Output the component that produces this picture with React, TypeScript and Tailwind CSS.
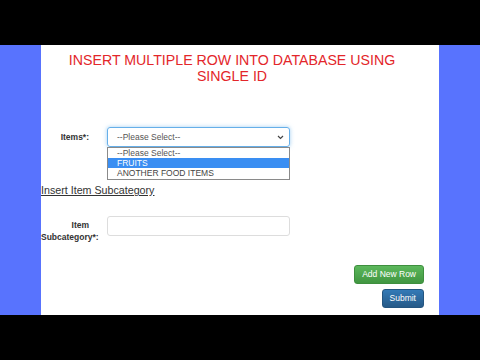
import React from "react";

export default function App() {
  const font = { fontFamily: '"Liberation Sans", Arial, sans-serif' };
  return (
    <div className="w-[480px] h-[360px] bg-black flex flex-col overflow-hidden" style={font}>
      <div className="h-[45px] shrink-0" />
      <div className="h-[270px] shrink-0 flex">
        <div className="w-[41px] shrink-0 bg-[#5873fe] relative z-10" />
        <div className="w-[398px] shrink-0 bg-white relative flex flex-col">
          <div className="pt-[7px] pr-[16px] text-center text-[14.2px] leading-[16px] text-[#e3262a]">
            INSERT MULTIPLE ROW INTO DATABASE USING
            <br />
            SINGLE ID
          </div>
          {/* Items row */}
          <div className="mt-[43px] flex items-center">
            <div className="w-[48px] text-right text-[8.5px] font-bold text-[#333] leading-[12px] whitespace-nowrap">
              Items*:
            </div>
            <div className="ml-[18px] relative">
              <div className="w-[183px] h-[20px] border border-[#66afe9] rounded-[3px] shadow-[0_0_4px_rgba(102,175,233,0.6)] flex items-center justify-between pl-[9px] pr-[5px]">
                <span className="text-[8.5px] text-[#555]">--Please Select--</span>
                <svg width="7" height="5" viewBox="0 0 7 5">
                  <path d="M1 1 L3.5 3.5 L6 1" stroke="#444" strokeWidth="1.2" fill="none" />
                </svg>
              </div>
              <div className="absolute left-0 top-[20px] w-[183px] bg-white border border-[#8a8a8a] pb-[1px] text-[8.5px] leading-[10px] z-20">
                <div className="h-[10px] pl-[9px] text-[#555]">--Please Select--</div>
                <div className="h-[10px] pl-[9px] bg-[#3a8ef2] text-white">FRUITS</div>
                <div className="h-[10px] pl-[9px] text-[#444]">ANOTHER FOOD ITEMS</div>
              </div>
            </div>
          </div>
          <div className="mt-[36px] text-[10.7px] leading-[14px] text-[#333] underline whitespace-nowrap">
            Insert Item Subcategory
          </div>
          {/* Subcategory row */}
          <div className="mt-[19px] flex items-start">
            <div className="w-[48px] mt-[3px] text-right text-[8.5px] font-bold text-[#333] leading-[12px]">
              Item Subcategory*:
            </div>
            <div className="ml-[18px] w-[183px] h-[20px] border border-[#ddd] rounded-[3px]" />
          </div>
          <div className="mt-[22px] flex flex-col items-end pr-[15px] gap-[5px]">
            <div className="h-[19px] px-[7px] flex items-center rounded-[3px] border border-[#3e8f3e] bg-linear-to-b from-[#5cb85c] to-[#419641] text-white text-[8.5px]">
              Add New Row
            </div>
            <div className="h-[19px] px-[7px] flex items-center rounded-[3px] border border-[#245580] bg-linear-to-b from-[#337ab7] to-[#265a88] text-white text-[8.5px]">
              Submit
            </div>
          </div>
        </div>
        <div className="w-[41px] shrink-0 bg-[#5873fe]" />
      </div>
      <div className="flex-1" />
    </div>
  );
}
